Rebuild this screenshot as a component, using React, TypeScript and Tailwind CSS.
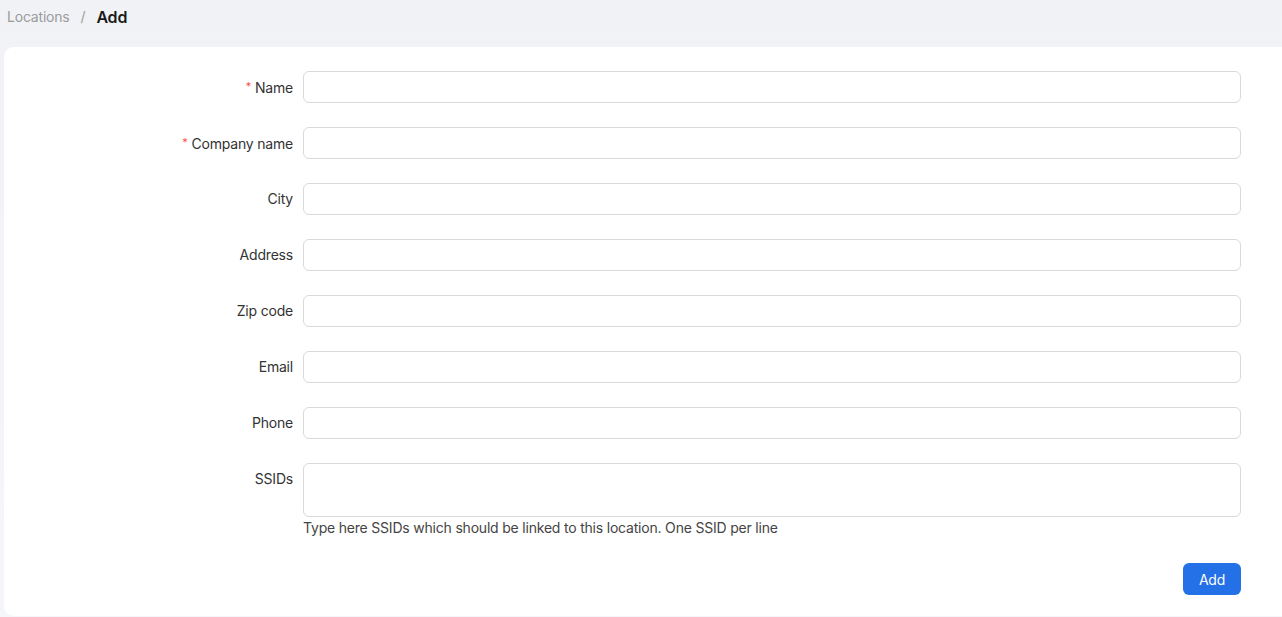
import React from 'react';

const fields = [
  { label: 'Name', required: true },
  { label: 'Company name', required: true },
  { label: 'City' },
  { label: 'Address' },
  { label: 'Zip code' },
  { label: 'Email' },
  { label: 'Phone' },
];

const App: React.FC = () => {
  return (
    <div className="h-[617px] overflow-hidden bg-gradient-to-b from-[#f1f2f6] to-[#f5f6fa] font-['Inter',sans-serif] text-[14px] tracking-[-0.2px] text-[#1f1f1f]">
      {/* Breadcrumb */}
      <div className="h-[47px] flex items-start pt-[6px] pl-[7px]">
        <span className="text-[#9b9b9b] leading-[22px]">Locations</span>
        <span className="text-[#9b9b9b] leading-[22px] mx-[11px]">/</span>
        <span className="text-[16px] font-semibold leading-[22px] text-[#1a1a1a]">Add</span>
      </div>

      {/* Form card */}
      <div className="ml-[4px] h-[569px] bg-white rounded-l-[10px] pt-[24px] pr-[41px]">
        <div className="flex flex-col gap-[24px]">
          {fields.map((f) => (
            <div key={f.label} className="flex items-center">
              <label className="w-[299px] shrink-0 text-right pr-[10px] text-[#333] leading-[22px] -mt-[1px]">
                {f.required && <span className="text-[#ff4d4f] mr-[4px] text-[11px] align-[3px]">*</span>}
                {f.label}
              </label>
              <input
                type="text"
                className="flex-1 h-[32px] rounded-[6px] border border-[#d9d9d9] px-[11px] outline-none"
              />
            </div>
          ))}

          <div className="flex items-start">
            <label className="w-[299px] shrink-0 text-right pr-[10px] text-[#333] leading-[22px] pt-[5px]">SSIDs</label>
            <div className="flex-1">
              <textarea className="block w-full h-[54px] rounded-[6px] border border-[#d9d9d9] px-[11px] py-[4px] outline-none resize-none" />
              <p className="text-[#444] leading-[22px] mt-0">
                Type here SSIDs which should be linked to this location. One SSID per line
              </p>
            </div>
          </div>
        </div>

        <div className="flex justify-end mt-[24px]">
          <button className="h-[32px] w-[58px] rounded-[6px] bg-[#2470e6] text-white text-[14px]">Add</button>
        </div>
      </div>
    </div>
  );
};

export default App;
